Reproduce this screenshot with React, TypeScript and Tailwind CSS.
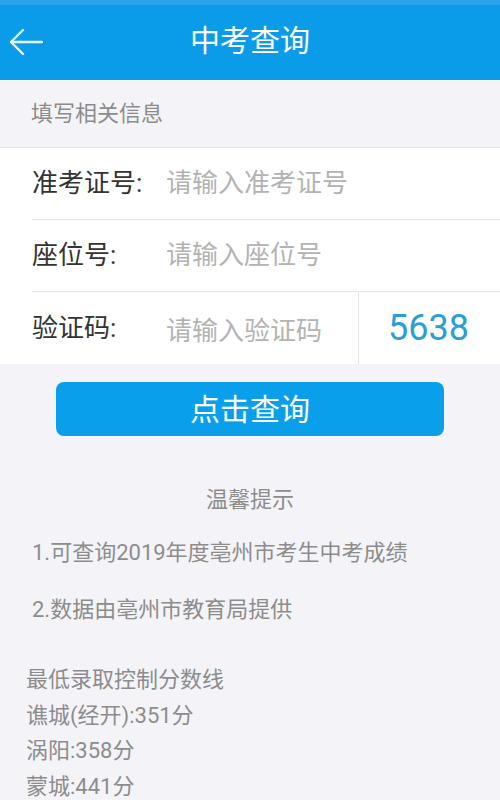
export default function App() {
  const font = { fontFamily: 'Roboto, "Noto Sans CJK SC", "Noto Sans", sans-serif' };

  return (
    <div className="w-[500px] h-[800px] overflow-hidden bg-[#f4f4f8]" style={font}>
      <div className="h-[5px] bg-[#2aa4ec]"></div>
      <div className="relative h-[75px] bg-[#0a9be9] flex items-center justify-center">
        <svg
          className="absolute left-[9px] top-[22px]"
          width="34"
          height="30"
          viewBox="0 0 34 30"
          fill="none"
          stroke="#e8f8ff"
          strokeWidth="2.4"
          strokeLinecap="round"
          strokeLinejoin="round"
        >
          <path d="M33 15H2M14 3L2 15l12 12" />
        </svg>
        <span className="text-[30px] text-white leading-none mb-[4px]">中考查询</span>
      </div>

      <div className="h-[68px] flex items-center px-[31px] text-[22px] text-[#8c8c8c] border-b border-[#e2e2e2]">
        填写相关信息
      </div>

      <div className="bg-white">
        <div className="h-[72px] flex items-center border-b border-[#e6e6e6] ml-[32px]">
          <span className="w-[134px] text-[26px] text-[#333]">准考证号:</span>
          <span className="text-[26px] text-[#b3b3b3]">请输入准考证号</span>
        </div>
        <div className="h-[72px] flex items-center border-b border-[#e6e6e6] ml-[32px]">
          <span className="w-[134px] text-[26px] text-[#333]">座位号:</span>
          <span className="text-[26px] text-[#b3b3b3]">请输入座位号</span>
        </div>
        <div className="h-[72px] flex items-stretch ml-[32px]">
          <div className="flex-1 flex items-center">
            <span className="w-[134px] text-[26px] text-[#333]">验证码:</span>
            <span className="text-[26px] text-[#b3b3b3] mt-[6px]">请输入验证码</span>
          </div>
          <div className="w-[142px] border-l border-[#e6e6e6] flex items-center justify-center">
            <span className="text-[36px] text-[#2a9ed6] mr-[2px] leading-none">5638</span>
          </div>
        </div>
      </div>

      <div className="px-[56px] pt-[18px]">
        <div className="h-[54px] rounded-[8px] bg-[#0a9fea] flex items-center justify-center text-[30px] text-white">
          点击查询
        </div>
      </div>

      <div className="mt-[49px] text-center text-[22px] leading-[30px] text-[#8c8c8c]">温馨提示</div>
      <div className="mt-[23px] px-[32px] text-[22px] leading-[30px] text-[#8c8c8c]">1.可查询2019年度亳州市考生中考成绩</div>
      <div className="mt-[27px] px-[32px] text-[22px] leading-[30px] text-[#8c8c8c]">2.数据由亳州市教育局提供</div>

      <div className="mt-[37px] px-[26px] flex flex-col text-[22px] text-[#8c8c8c] leading-[35.5px]">
        <span>最低录取控制分数线</span>
        <span>谯城(经开):351分</span>
        <span>涡阳:358分</span>
        <span>蒙城:441分</span>
      </div>
    </div>
  );
}
